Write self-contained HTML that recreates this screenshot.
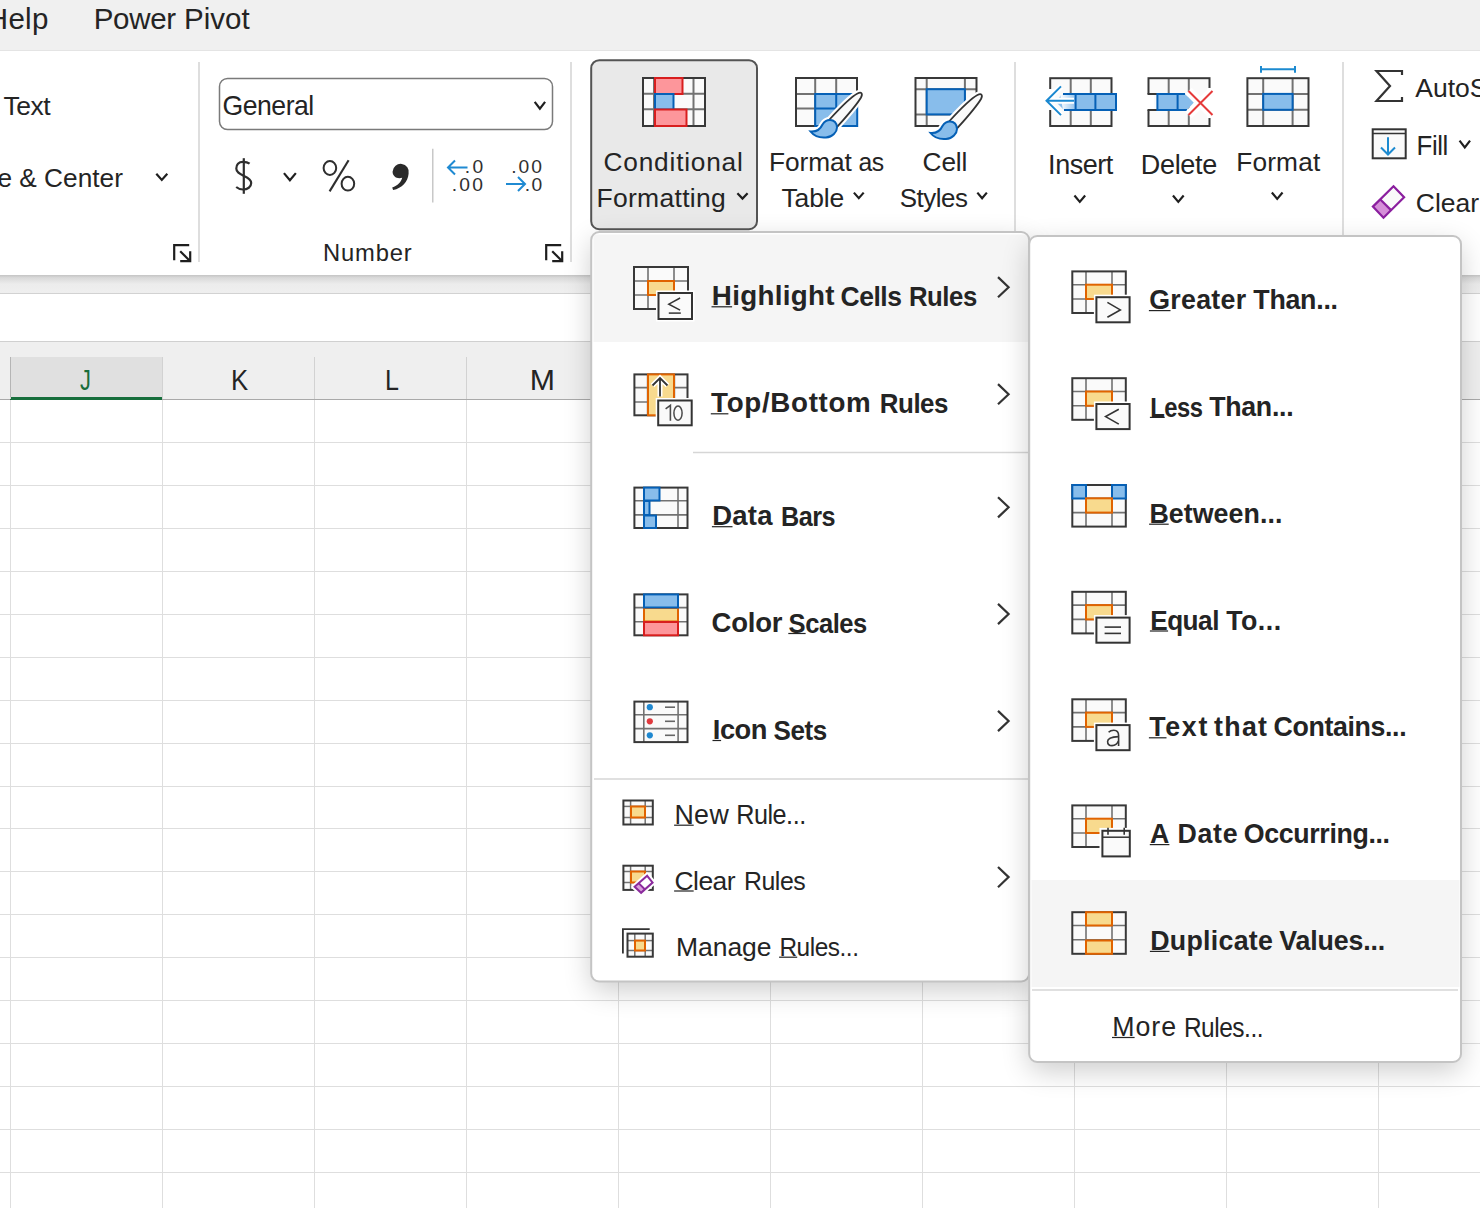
<!DOCTYPE html>
<html><head><meta charset="utf-8"><title>Excel Conditional Formatting</title>
<style>html,body{margin:0;padding:0;background:#fff;overflow:hidden}svg{display:block}text{font-family:"Liberation Sans",sans-serif;white-space:pre}</style>
</head><body>
<svg width="1480" height="1208" viewBox="0 0 1480 1208" font-family="Liberation Sans, sans-serif">
<defs>
<linearGradient id="rshadow" x1="0" y1="0" x2="0" y2="1">
<stop offset="0" stop-color="#c4c4c4"/><stop offset="0.15" stop-color="#d9d9d9"/><stop offset="0.5" stop-color="#ececec"/><stop offset="1" stop-color="#efefef"/></linearGradient>
<filter id="msh" x="-30%" y="-30%" width="160%" height="160%">
<feGaussianBlur in="SourceAlpha" stdDeviation="14"/><feOffset dx="0" dy="9"/>
<feComponentTransfer><feFuncA type="linear" slope="0.2"/></feComponentTransfer>
<feMerge><feMergeNode/><feMergeNode in="SourceGraphic"/></feMerge></filter>
</defs>
<rect x="0" y="0" width="1480" height="1208" fill="#ffffff" stroke="none" stroke-width="0" rx="0" />
<rect x="0" y="0" width="1480" height="50" fill="#f0f0f0" stroke="none" stroke-width="0" rx="0" />
<line x1="0" y1="50.5" x2="1480" y2="50.5" stroke="#e4e4e4" stroke-width="1" />
<text x="-13.20" y="28.60" font-size="29.5" font-weight="normal" fill="#242424" letter-spacing="0.267">Help</text>
<text x="93.80" y="28.60" font-size="29.5" font-weight="normal" fill="#242424" letter-spacing="-0.350">Power</text>
<text x="184.10" y="28.60" font-size="29.5" font-weight="normal" fill="#242424" letter-spacing="-0.025">Pivot</text>
<rect x="0" y="275" width="1480" height="18" fill="url(#rshadow)" stroke="none" stroke-width="0" rx="0" />
<line x1="0" y1="293.5" x2="1480" y2="293.5" stroke="#d2d2d2" stroke-width="1" />
<line x1="0" y1="341.5" x2="1480" y2="341.5" stroke="#d0d0d0" stroke-width="1" />
<rect x="0" y="342" width="1480" height="57" fill="#efefef" stroke="none" stroke-width="0" rx="0" />
<rect x="10" y="357" width="152" height="40" fill="#e0e0e0" stroke="none" stroke-width="0" rx="0" />
<line x1="0" y1="399.5" x2="1480" y2="399.5" stroke="#a9a9a9" stroke-width="1" />
<rect x="10" y="397" width="152" height="3" fill="#176e3c" stroke="none" stroke-width="0" rx="0" />
<line x1="10.5" y1="357" x2="10.5" y2="399" stroke="#d2d2d2" stroke-width="1" />
<line x1="162.5" y1="357" x2="162.5" y2="399" stroke="#d2d2d2" stroke-width="1" />
<line x1="314.5" y1="357" x2="314.5" y2="399" stroke="#d2d2d2" stroke-width="1" />
<line x1="466.5" y1="357" x2="466.5" y2="399" stroke="#d2d2d2" stroke-width="1" />
<line x1="618.5" y1="357" x2="618.5" y2="399" stroke="#d2d2d2" stroke-width="1" />
<line x1="770.5" y1="357" x2="770.5" y2="399" stroke="#d2d2d2" stroke-width="1" />
<line x1="922.5" y1="357" x2="922.5" y2="399" stroke="#d2d2d2" stroke-width="1" />
<line x1="1074.5" y1="357" x2="1074.5" y2="399" stroke="#d2d2d2" stroke-width="1" />
<line x1="1226.5" y1="357" x2="1226.5" y2="399" stroke="#d2d2d2" stroke-width="1" />
<line x1="1378.5" y1="357" x2="1378.5" y2="399" stroke="#d2d2d2" stroke-width="1" />
<line x1="10.5" y1="357" x2="10.5" y2="397" stroke="#b5b5b5" stroke-width="1" />
<g transform="translate(85.5,0) scale(0.72,1) translate(-85.5,0)">
<text x="78.00" y="389.90" font-size="30.25" font-weight="normal" fill="#1a6d3b" letter-spacing="0.000">J</text>
</g>
<g transform="translate(239.6,0) scale(0.85,1) translate(-239.6,0)">
<text x="229.60" y="389.90" font-size="30.25" font-weight="normal" fill="#242424" letter-spacing="0.000">K</text>
</g>
<g transform="translate(391.95,0) scale(0.83,1) translate(-391.95,0)">
<text x="383.45" y="389.90" font-size="30.25" font-weight="normal" fill="#242424" letter-spacing="0.000">L</text>
</g>
<g transform="translate(542.25,0) scale(1.0,1) translate(-542.25,0)">
<text x="529.75" y="389.90" font-size="30.25" font-weight="normal" fill="#242424" letter-spacing="0.000">M</text>
</g>
<rect x="0" y="442" width="1480" height="1" fill="#dedede" stroke="none" stroke-width="0" rx="0" />
<rect x="0" y="485" width="1480" height="1" fill="#dedede" stroke="none" stroke-width="0" rx="0" />
<rect x="0" y="528" width="1480" height="1" fill="#dedede" stroke="none" stroke-width="0" rx="0" />
<rect x="0" y="571" width="1480" height="1" fill="#dedede" stroke="none" stroke-width="0" rx="0" />
<rect x="0" y="614" width="1480" height="1" fill="#dedede" stroke="none" stroke-width="0" rx="0" />
<rect x="0" y="657" width="1480" height="1" fill="#dedede" stroke="none" stroke-width="0" rx="0" />
<rect x="0" y="700" width="1480" height="1" fill="#dedede" stroke="none" stroke-width="0" rx="0" />
<rect x="0" y="743" width="1480" height="1" fill="#dedede" stroke="none" stroke-width="0" rx="0" />
<rect x="0" y="786" width="1480" height="1" fill="#dedede" stroke="none" stroke-width="0" rx="0" />
<rect x="0" y="828" width="1480" height="1" fill="#dedede" stroke="none" stroke-width="0" rx="0" />
<rect x="0" y="871" width="1480" height="1" fill="#dedede" stroke="none" stroke-width="0" rx="0" />
<rect x="0" y="914" width="1480" height="1" fill="#dedede" stroke="none" stroke-width="0" rx="0" />
<rect x="0" y="957" width="1480" height="1" fill="#dedede" stroke="none" stroke-width="0" rx="0" />
<rect x="0" y="1000" width="1480" height="1" fill="#dedede" stroke="none" stroke-width="0" rx="0" />
<rect x="0" y="1043" width="1480" height="1" fill="#dedede" stroke="none" stroke-width="0" rx="0" />
<rect x="0" y="1086" width="1480" height="1" fill="#dedede" stroke="none" stroke-width="0" rx="0" />
<rect x="0" y="1129" width="1480" height="1" fill="#dedede" stroke="none" stroke-width="0" rx="0" />
<rect x="0" y="1172" width="1480" height="1" fill="#dedede" stroke="none" stroke-width="0" rx="0" />
<line x1="10.5" y1="400" x2="10.5" y2="1208" stroke="#dedede" stroke-width="1" />
<line x1="162.5" y1="400" x2="162.5" y2="1208" stroke="#dedede" stroke-width="1" />
<line x1="314.5" y1="400" x2="314.5" y2="1208" stroke="#dedede" stroke-width="1" />
<line x1="466.5" y1="400" x2="466.5" y2="1208" stroke="#dedede" stroke-width="1" />
<line x1="618.5" y1="400" x2="618.5" y2="1208" stroke="#dedede" stroke-width="1" />
<line x1="770.5" y1="400" x2="770.5" y2="1208" stroke="#dedede" stroke-width="1" />
<line x1="922.5" y1="400" x2="922.5" y2="1208" stroke="#dedede" stroke-width="1" />
<line x1="1074.5" y1="400" x2="1074.5" y2="1208" stroke="#dedede" stroke-width="1" />
<line x1="1226.5" y1="400" x2="1226.5" y2="1208" stroke="#dedede" stroke-width="1" />
<line x1="1378.5" y1="400" x2="1378.5" y2="1208" stroke="#dedede" stroke-width="1" />
<line x1="199" y1="62" x2="199" y2="262" stroke="#d3d3d3" stroke-width="1.5" />
<line x1="571" y1="62" x2="571" y2="262" stroke="#d3d3d3" stroke-width="1.5" />
<line x1="1015" y1="62" x2="1015" y2="275" stroke="#d3d3d3" stroke-width="1.5" />
<line x1="1343" y1="62" x2="1343" y2="275" stroke="#d3d3d3" stroke-width="1.5" />
<text x="3.50" y="115.00" font-size="26.5" font-weight="normal" fill="#242424" letter-spacing="-0.467">Text</text>
<text x="-62.40" y="186.50" font-size="26.25" font-weight="normal" fill="#242424">Merge & Center</text>
<path d="M156.30,173.70 L161.80,179.90 L167.30,173.70" fill="none" stroke="#1f1f1f" stroke-width="2.2" />
<path d="M174.2,260.2 V245.2 H189.2" fill="none" stroke="#1e1e1e" stroke-width="2.2" />
<path d="M180.2,251.2 L189.7,260.7" fill="none" stroke="#1e1e1e" stroke-width="2.2" />
<path d="M190.2,251.2 V261.2 H180.2" fill="none" stroke="#1e1e1e" stroke-width="2.2" />
<path d="M546.2,260.2 V245.2 H561.2" fill="none" stroke="#1e1e1e" stroke-width="2.2" />
<path d="M552.2,251.2 L561.7,260.7" fill="none" stroke="#1e1e1e" stroke-width="2.2" />
<path d="M562.2,251.2 V261.2 H552.2" fill="none" stroke="#1e1e1e" stroke-width="2.2" />
<text x="323.00" y="260.80" font-size="23.75" font-weight="normal" fill="#242424" letter-spacing="0.860">Number</text>
<rect x="219.5" y="78.5" width="333" height="51" fill="#ffffff" stroke="#7a7a7a" stroke-width="1.5" rx="8" />
<g transform="translate(222.55,0) scale(0.9951,1)">
<text x="0" y="115.10" font-size="26.75" font-weight="normal" fill="#242424" letter-spacing="-0.500">General</text>
</g>
<path d="M534.70,101.80 L539.90,108.60 L545.10,101.80" fill="none" stroke="#1f1f1f" stroke-width="2.2" />
<path d="M243.8,158.2 V193.8" fill="none" stroke="#2e2e2e" stroke-width="2.2" />
<path d="M249.6,163.6 C247.5,162 245,161.8 243,161.8 C238.5,161.8 236.3,165 236.3,168.5 C236.3,172.5 240,174 244,176 C248.5,178 251.2,180 251.2,183 C251.2,187 247.5,189.5 243,189.5 C240.5,189.5 238,188.5 236.2,187" fill="none" stroke="#2e2e2e" stroke-width="2.2" />
<path d="M283.95,173.10 L289.90,180.30 L295.85,173.10" fill="none" stroke="#1f1f1f" stroke-width="2.2" />
<ellipse cx="329.9" cy="168" rx="6.3" ry="6.9" fill="none" stroke="#2e2e2e" stroke-width="2"/>
<ellipse cx="347.9" cy="183.7" rx="6.3" ry="6.9" fill="none" stroke="#2e2e2e" stroke-width="2"/>
<path d="M348.6,160.2 L329.6,191.4" fill="none" stroke="#2e2e2e" stroke-width="2.1" />
<path d="M400.5,162.5 a8,8 0 1 1 0.1,0 Z" fill="none" stroke="none" stroke-width="0" />
<path d="M392.6,171.5 a8.1,8.1 0 1 1 16,2.2 c-0.8,8 -6.5,14.5 -15.5,16.3 l-0.9,-2.4 c5.5,-1.8 9,-5.6 10,-9.8 c-5.2,1.6 -9.8,-1.5 -9.6,-6.3 Z" fill="#2a2a2a"/>
<line x1="432.75" y1="148.75" x2="432.75" y2="202.5" stroke="#c8c8c8" stroke-width="1.5" />
<path d="M467.5,167.5 H448 M455,160.5 L448,167.5 L455,174.5" fill="none" stroke="#1f8ad2" stroke-width="2" />
<text x="464.80" y="172.50" font-size="19.25" font-weight="normal" fill="#303030" letter-spacing="2.300">.0</text>
<text x="451.80" y="191.00" font-size="19.25" font-weight="normal" fill="#303030" letter-spacing="2.150">.00</text>
<text x="511.30" y="172.50" font-size="19.25" font-weight="normal" fill="#303030" letter-spacing="1.900">.00</text>
<path d="M506,184 H525 M518,177 L525,184 L518,191" fill="none" stroke="#1f8ad2" stroke-width="2" />
<text x="524.80" y="191.00" font-size="19.25" font-weight="normal" fill="#303030" letter-spacing="1.300">.0</text>
<rect x="591.2" y="60.2" width="165.8" height="169" fill="#e9e9e9" stroke="#545454" stroke-width="2" rx="8" />
<rect x="643.0" y="78.0" width="62" height="48" fill="#fafafa" stroke="none" stroke-width="0" rx="0" />
<line x1="654" y1="78.0" x2="654" y2="126.0" stroke="#727272" stroke-width="2" />
<line x1="693.5" y1="78.0" x2="693.5" y2="126.0" stroke="#727272" stroke-width="2" />
<line x1="643.0" y1="93.8" x2="705.0" y2="93.8" stroke="#727272" stroke-width="2" />
<line x1="643.0" y1="109.3" x2="705.0" y2="109.3" stroke="#727272" stroke-width="2" />
<rect x="643.0" y="78.0" width="62" height="48" fill="none" stroke="#383838" stroke-width="2" rx="0" />
<rect x="655.0" y="78.0" width="27.5" height="16" fill="#fd969b" stroke="#d81e1e" stroke-width="2" rx="0" />
<rect x="655.0" y="94.0" width="18.5" height="15.5" fill="#88bdeb" stroke="#0560b6" stroke-width="2" rx="0" />
<rect x="655.0" y="109.5" width="31.5" height="16.5" fill="#fd969b" stroke="#d81e1e" stroke-width="2" rx="0" />
<text x="603.60" y="170.50" font-size="26.25" font-weight="normal" fill="#242424" letter-spacing="0.790">Conditional</text>
<text x="596.50" y="206.50" font-size="26.5" font-weight="normal" fill="#242424" letter-spacing="0.289">Formatting</text>
<path d="M737.40,193.20 L742.50,198.60 L747.60,193.20" fill="none" stroke="#1f1f1f" stroke-width="2.2" />
<rect x="796.0" y="78.0" width="61" height="48" fill="#fafafa" stroke="none" stroke-width="0" rx="0" />
<line x1="815.2" y1="78.0" x2="815.2" y2="126.0" stroke="#727272" stroke-width="2" />
<line x1="836.2" y1="78.0" x2="836.2" y2="126.0" stroke="#727272" stroke-width="2" />
<line x1="796.0" y1="94" x2="857.0" y2="94" stroke="#727272" stroke-width="2" />
<line x1="796.0" y1="108.6" x2="857.0" y2="108.6" stroke="#727272" stroke-width="2" />
<rect x="796.0" y="78.0" width="61" height="48" fill="none" stroke="#383838" stroke-width="2" rx="0" />
<rect x="815.2" y="94" width="42" height="32" fill="#88bdeb" stroke="#0560b6" stroke-width="2" rx="0" />
<line x1="836.2" y1="94" x2="836.2" y2="126" stroke="#0560b6" stroke-width="2" />
<line x1="815.2" y1="108.6" x2="857" y2="108.6" stroke="#0560b6" stroke-width="2" />
<path d="M829.5,119.5 C840,108 851,97 857.5,93.5 C861.5,91.5 863,93.5 861,97.5 C856,106 846,117 837.5,126.5 Z" fill="#ffffff" stroke="#ffffff" stroke-width="6" stroke-linejoin="round"/>
<path d="M822.5,124.5 C820,130 816,132 810.5,131.5 C814,136 820,138 826,137.5 C832.5,137 837,132 837,127.5 C837,123 834,120 830,120 C826.5,120 824,122 822.5,124.5 Z" fill="#ffffff" stroke="#ffffff" stroke-width="6" stroke-linejoin="round"/>
<path d="M829.5,119.5 C840,108 851,97 857.5,93.5 C861.5,91.5 863,93.5 861,97.5 C856,106 846,117 837.5,126.5 Z" fill="#fafafa" stroke="#333" stroke-width="1.8" />
<path d="M822.5,124.5 C820,130 816,132 810.5,131.5 C814,136 820,138 826,137.5 C832.5,137 837,132 837,127.5 C837,123 834,120 830,120 C826.5,120 824,122 822.5,124.5 Z" fill="#88bdeb" stroke="#0560b6" stroke-width="2" />
<text x="768.90" y="170.70" font-size="26.25" font-weight="normal" fill="#242424" letter-spacing="-0.040">Format</text>
<g transform="translate(858.40,0) scale(0.9418,1)">
<text x="0" y="171.30" font-size="26.25" font-weight="normal" fill="#242424" letter-spacing="-0.500">as</text>
</g>
<text x="781.50" y="206.70" font-size="26.5" font-weight="normal" fill="#242424" letter-spacing="-0.175">Table</text>
<path d="M853.90,192.60 L858.80,198.20 L863.70,192.60" fill="none" stroke="#1f1f1f" stroke-width="2.2" />
<rect x="915.5" y="78.0" width="61.0" height="48" fill="#fafafa" stroke="none" stroke-width="0" rx="0" />
<line x1="926.7" y1="78.0" x2="926.7" y2="126.0" stroke="#727272" stroke-width="2" />
<line x1="964.9" y1="78.0" x2="964.9" y2="126.0" stroke="#727272" stroke-width="2" />
<line x1="915.5" y1="89.2" x2="976.5" y2="89.2" stroke="#727272" stroke-width="2" />
<line x1="915.5" y1="114.4" x2="976.5" y2="114.4" stroke="#727272" stroke-width="2" />
<rect x="915.5" y="78.0" width="61.0" height="48" fill="none" stroke="#383838" stroke-width="2" rx="0" />
<rect x="926.7" y="89.2" width="38.2" height="25.2" fill="#88bdeb" stroke="#0560b6" stroke-width="2" rx="0" />
<path d="M966,104 L992,84 V142 H936 Z" fill="#ffffff" stroke="none" stroke-width="0" />
<path d="M949.5,121.0 C960,109.5 971,98.5 977.5,95.0 C981.5,93.0 983,95.0 981,99.0 C976,107.5 966,118.5 957.5,128.0 Z" fill="#ffffff" stroke="#ffffff" stroke-width="6" stroke-linejoin="round"/>
<path d="M942.5,126.0 C940,131.5 936,133.5 930.5,133.0 C934,137.5 940,139.5 946,139.0 C952.5,138.5 957,133.5 957,129.0 C957,124.5 954,121.5 950,121.5 C946.5,121.5 944,123.5 942.5,126.0 Z" fill="#ffffff" stroke="#ffffff" stroke-width="6" stroke-linejoin="round"/>
<path d="M949.5,121.0 C960,109.5 971,98.5 977.5,95.0 C981.5,93.0 983,95.0 981,99.0 C976,107.5 966,118.5 957.5,128.0 Z" fill="#fafafa" stroke="#333" stroke-width="1.8" />
<path d="M942.5,126.0 C940,131.5 936,133.5 930.5,133.0 C934,137.5 940,139.5 946,139.0 C952.5,138.5 957,133.5 957,129.0 C957,124.5 954,121.5 950,121.5 C946.5,121.5 944,123.5 942.5,126.0 Z" fill="#88bdeb" stroke="#0560b6" stroke-width="2" />
<text x="922.60" y="170.70" font-size="26.25" font-weight="normal" fill="#242424" letter-spacing="-0.167">Cell</text>
<g transform="translate(899.80,0) scale(0.9784,1)">
<text x="0" y="207.30" font-size="26.5" font-weight="normal" fill="#242424" letter-spacing="-0.500">Styles</text>
</g>
<path d="M977.35,192.60 L982.10,198.20 L986.85,192.60" fill="none" stroke="#1f1f1f" stroke-width="2.2" />
<rect x="1050.2" y="78.2" width="61.299999999999955" height="47.8" fill="#fafafa" stroke="none" stroke-width="0" rx="0" />
<line x1="1070.7" y1="78.2" x2="1070.7" y2="126.0" stroke="#727272" stroke-width="2" />
<line x1="1090.8" y1="78.2" x2="1090.8" y2="126.0" stroke="#727272" stroke-width="2" />
<rect x="1050.2" y="78.2" width="61.299999999999955" height="47.8" fill="none" stroke="#383838" stroke-width="2" rx="0" />
<rect x="1045" y="89" width="10" height="21" fill="#ffffff" stroke="none" stroke-width="0" rx="0" />
<linearGradient id="ifade" x1="0" x2="1"><stop offset="0" stop-color="#ffffff"/><stop offset="1" stop-color="#88bdeb"/></linearGradient>
<path d="M1061,94 H1116 V110 H1064 L1057,103 Z" fill="#88bdeb" stroke="none" stroke-width="0" />
<path d="M1060,94 H1077 V110 H1063 Z" fill="url(#ifade)" stroke="none" stroke-width="0" />
<path d="M1063,94 H1116 V110 H1064" fill="none" stroke="#0560b6" stroke-width="2" />
<line x1="1075.6" y1="94" x2="1075.6" y2="110" stroke="#0560b6" stroke-width="2" />
<line x1="1095.4" y1="94" x2="1095.4" y2="110" stroke="#0560b6" stroke-width="2" />
<path d="M1074,100.7 H1046.5 M1061,86.4 L1046.5,100.7 L1061,115.1" fill="none" stroke="#ffffff" stroke-width="6" stroke-linejoin="round"/>
<path d="M1074,100.7 H1046.5 M1061,86.4 L1046.5,100.7 L1061,115.1" fill="none" stroke="#1a88d0" stroke-width="2" />
<text x="1048.10" y="174.20" font-size="27.0" font-weight="normal" fill="#242424" letter-spacing="-0.460">Insert</text>
<path d="M1074.45,195.55 L1079.80,201.85 L1085.15,195.55" fill="none" stroke="#1f1f1f" stroke-width="2.2" />
<rect x="1148.5" y="78.2" width="61.0" height="47.8" fill="#fafafa" stroke="none" stroke-width="0" rx="0" />
<line x1="1168.7" y1="78.2" x2="1168.7" y2="126.0" stroke="#727272" stroke-width="2" />
<line x1="1188.8" y1="78.2" x2="1188.8" y2="126.0" stroke="#727272" stroke-width="2" />
<rect x="1148.5" y="78.2" width="61.0" height="47.8" fill="none" stroke="#383838" stroke-width="2" rx="0" />
<rect x="1146" y="94" width="8" height="16" fill="#ffffff" stroke="none" stroke-width="0" rx="0" />
<line x1="1147.5" y1="94" x2="1158" y2="94" stroke="#383838" stroke-width="2" />
<line x1="1147.5" y1="110" x2="1158" y2="110" stroke="#383838" stroke-width="2" />
<path d="M1157.4,94 H1185 L1194.3,102 L1187,110 H1157.4 Z" fill="#88bdeb" stroke="none" stroke-width="0" />
<path d="M1185,94 H1157.4 V110 H1187" fill="none" stroke="#0560b6" stroke-width="2" />
<line x1="1177.6" y1="94" x2="1177.6" y2="110" stroke="#0560b6" stroke-width="2" />
<rect x="1207" y="88" width="6" height="30" fill="#ffffff" stroke="none" stroke-width="0" rx="0" />
<path d="M1188.5,91 L1212.5,115 M1212.5,91 L1188.5,115" fill="none" stroke="#ffffff" stroke-width="9" />
<path d="M1188.5,91 L1212.5,115 M1212.5,91 L1188.5,115" fill="none" stroke="#e53a3a" stroke-width="2" />
<text x="1140.80" y="174.20" font-size="27.0" font-weight="normal" fill="#242424" letter-spacing="-0.340">Delete</text>
<path d="M1172.95,195.55 L1178.30,201.85 L1183.65,195.55" fill="none" stroke="#1f1f1f" stroke-width="2.2" />
<rect x="1247.4" y="78.2" width="61.09999999999991" height="47.8" fill="#fafafa" stroke="none" stroke-width="0" rx="0" />
<line x1="1263.2" y1="78.2" x2="1263.2" y2="126.0" stroke="#727272" stroke-width="2" />
<line x1="1292.6" y1="78.2" x2="1292.6" y2="126.0" stroke="#727272" stroke-width="2" />
<line x1="1247.4" y1="93.9" x2="1308.5" y2="93.9" stroke="#727272" stroke-width="2" />
<line x1="1247.4" y1="109.8" x2="1308.5" y2="109.8" stroke="#727272" stroke-width="2" />
<rect x="1247.4" y="78.2" width="61.09999999999991" height="47.8" fill="none" stroke="#383838" stroke-width="2" rx="0" />
<rect x="1263.2" y="93.9" width="29.4" height="15.9" fill="#88bdeb" stroke="#0560b6" stroke-width="2" rx="0" />
<path d="M1261,69.2 H1295 M1261,66 V72.7 M1295,66 V72.7" fill="none" stroke="#1c8ad0" stroke-width="2" />
<text x="1236.20" y="170.60" font-size="26.25" font-weight="normal" fill="#242424" letter-spacing="0.180">Format</text>
<path d="M1271.85,192.55 L1277.20,198.85 L1282.55,192.55" fill="none" stroke="#1f1f1f" stroke-width="2.2" />
<path d="M1402,75 V71 H1376.5 L1390,86 L1376.5,101 H1402 V97" fill="none" stroke="#333" stroke-width="2.2" />
<text x="1415.30" y="96.90" font-size="26.5" font-weight="normal" fill="#242424" letter-spacing="0.000">AutoSum</text>
<rect x="1372.7" y="129.3" width="33" height="29" fill="#fafafa" stroke="#333" stroke-width="2" rx="0" />
<line x1="1372.7" y1="133.5" x2="1405.7" y2="133.5" stroke="#333" stroke-width="1.5" />
<path d="M1388,137.3 V154 M1381,147.5 L1388,154.5 L1395,147.5" fill="none" stroke="#1c8ad0" stroke-width="2" />
<g transform="translate(1416.60,0) scale(0.9582,1)">
<text x="0" y="155.20" font-size="27.0" font-weight="normal" fill="#242424" letter-spacing="-0.500">Fill</text>
</g>
<path d="M1459.55,140.65 L1464.80,147.35 L1470.05,140.65" fill="none" stroke="#1f1f1f" stroke-width="2.2" />
<path d="M1393.5,186.2 L1404.1,197.3 L1383.5,217.7 L1372.9,206.6 Z" fill="#f9f9f9" stroke="none" stroke-width="0" />
<path d="M1372.9,206.6 L1380.6,199.7 L1390.8,209.9 L1383.5,217.7 Z" fill="#d58fd8" stroke="none" stroke-width="0" />
<path d="M1393.5,186.2 L1404.1,197.3 L1383.5,217.7 L1372.9,206.6 Z" fill="none" stroke="#8b1f9f" stroke-width="2.2" />
<line x1="1380.6" y1="199.7" x2="1390.8" y2="209.9" stroke="#8b1f9f" stroke-width="2.2" />
<text x="1415.80" y="212.00" font-size="26.5" font-weight="normal" fill="#242424" letter-spacing="0.000">Clear</text>
<g filter="url(#msh)">
<rect x="591.2" y="232" width="438" height="749.5" fill="#ffffff" stroke="none" stroke-width="0" rx="8" />
</g>
<clipPath id="m1clip"><rect x="592.2" y="233" width="436" height="747.5" rx="7"/></clipPath>
<g clip-path="url(#m1clip)">
<rect x="593.5" y="234.5" width="435" height="107.5" fill="#f5f5f5" stroke="none" stroke-width="0" rx="0" />
</g>
<rect x="591.2" y="232" width="438" height="749.5" fill="none" stroke="#c4c4c4" stroke-width="2" rx="8" />
<rect x="634.0" y="267.0" width="54" height="42" fill="#fafafa" stroke="none" stroke-width="0" rx="0" />
<line x1="648" y1="267.0" x2="648" y2="309.0" stroke="#727272" stroke-width="1.6" />
<line x1="674" y1="267.0" x2="674" y2="309.0" stroke="#727272" stroke-width="1.6" />
<line x1="634.0" y1="281" x2="688.0" y2="281" stroke="#727272" stroke-width="1.6" />
<line x1="634.0" y1="295" x2="688.0" y2="295" stroke="#727272" stroke-width="1.6" />
<rect x="634.0" y="267.0" width="54" height="42" fill="none" stroke="#383838" stroke-width="2" rx="0" />
<rect x="648.0" y="281.0" width="26" height="14" fill="#f8da8e" stroke="#e06300" stroke-width="2" rx="0" />
<rect x="656.0" y="290.5" width="38.5" height="31" fill="#ffffff" stroke="none" stroke-width="0" rx="0" />
<rect x="658.5" y="293" width="33.5" height="26" fill="#fafafa" stroke="#333" stroke-width="2" rx="0" />
<path d="M680.1,298 L668.8,304.2 L680.1,310.1" fill="none" stroke="#333" stroke-width="1.5" />
<line x1="668.8" y1="313.1" x2="680.8" y2="313.1" stroke="#333" stroke-width="1.5" />
<text x="711.80" y="305.40" font-size="27.75" font-weight="bold" fill="#242424" letter-spacing="0.313">Highlight</text>
<rect x="711.50" y="306.20" width="20.60" height="1.2" fill="#242424"/>
<g transform="translate(840.60,0) scale(0.9547,1)">
<text x="0" y="306.00" font-size="27.75" font-weight="bold" fill="#242424" letter-spacing="-0.500">Cells</text>
</g>
<g transform="translate(909.00,0) scale(0.9270,1)">
<text x="0" y="306.00" font-size="27.75" font-weight="bold" fill="#242424" letter-spacing="-0.500">Rules</text>
</g>
<path d="M998,277.09999999999997 L1008.6,287.2 L998,297.3" fill="none" stroke="#333" stroke-width="2.2" />
<rect x="634.4" y="374.4" width="53.10000000000002" height="40.900000000000034" fill="#fafafa" stroke="none" stroke-width="0" rx="0" />
<line x1="647.6" y1="374.4" x2="647.6" y2="415.3" stroke="#727272" stroke-width="1.6" />
<line x1="674.4" y1="374.4" x2="674.4" y2="415.3" stroke="#727272" stroke-width="1.6" />
<line x1="634.4" y1="387.6" x2="687.5" y2="387.6" stroke="#727272" stroke-width="1.6" />
<line x1="634.4" y1="402" x2="687.5" y2="402" stroke="#727272" stroke-width="1.6" />
<rect x="634.4" y="374.4" width="53.10000000000002" height="40.900000000000034" fill="none" stroke="#383838" stroke-width="2" rx="0" />
<rect x="648.0" y="374.4" width="26" height="40.900000000000034" fill="#f8da8e" stroke="#e06300" stroke-width="2" rx="0" />
<path d="M660,396.5 V378.5 M652.5,385.5 L660,378 L667.5,385.5" fill="none" stroke="#ffffff" stroke-width="5" />
<path d="M660,396.5 V378.5 M652.5,385.5 L660,378 L667.5,385.5" fill="none" stroke="#333" stroke-width="1.8" />
<rect x="655.7" y="398.0" width="38.5" height="29.80000000000001" fill="#ffffff" stroke="none" stroke-width="0" rx="0" />
<rect x="658.2" y="400.5" width="33.5" height="24.80000000000001" fill="#fafafa" stroke="#333" stroke-width="2" rx="0" />
<path d="M665.6,408.8 L670.4,405.4 V420.8" fill="none" stroke="#4a4a4a" stroke-width="1.6" />
<ellipse cx="678" cy="413.1" rx="4.1" ry="7.1" fill="none" stroke="#4a4a4a" stroke-width="1.5"/>
<text x="711.10" y="412.40" font-size="27.75" font-weight="bold" fill="#242424" letter-spacing="0.678">Top/Bottom</text>
<rect x="710.80" y="413.20" width="17.60" height="1.2" fill="#242424"/>
<g transform="translate(879.80,0) scale(0.9338,1)">
<text x="0" y="413.00" font-size="27.75" font-weight="bold" fill="#242424" letter-spacing="-0.500">Rules</text>
</g>
<path d="M998,384.09999999999997 L1008.6,394.2 L998,404.3" fill="none" stroke="#333" stroke-width="2.2" />
<line x1="693" y1="452.5" x2="1028" y2="452.5" stroke="#d6d6d6" stroke-width="1.5" />
<rect x="634.4" y="487.6" width="53.10000000000002" height="40.39999999999998" fill="#fafafa" stroke="none" stroke-width="0" rx="0" />
<line x1="678" y1="487.6" x2="678" y2="528.0" stroke="#727272" stroke-width="1.6" />
<line x1="634.4" y1="500.7" x2="687.5" y2="500.7" stroke="#727272" stroke-width="1.6" />
<line x1="634.4" y1="514.9" x2="687.5" y2="514.9" stroke="#727272" stroke-width="1.6" />
<rect x="634.4" y="487.6" width="53.10000000000002" height="40.39999999999998" fill="none" stroke="#383838" stroke-width="2" rx="0" />
<rect x="644.0" y="487.6" width="15.5" height="12.899999999999977" fill="#88bdeb" stroke="#0560b6" stroke-width="2" rx="0" />
<rect x="644.0" y="501.0" width="5.5" height="14" fill="#88bdeb" stroke="#0560b6" stroke-width="2" rx="0" />
<rect x="644.0" y="515.5" width="12" height="12.5" fill="#88bdeb" stroke="#0560b6" stroke-width="2" rx="0" />
<text x="712.20" y="525.30" font-size="27.5" font-weight="bold" fill="#242424" letter-spacing="0.233">Data</text>
<rect x="711.90" y="526.10" width="20.60" height="1.2" fill="#242424"/>
<g transform="translate(780.90,0) scale(0.9176,1)">
<text x="0" y="525.90" font-size="27.5" font-weight="bold" fill="#242424" letter-spacing="-0.500">Bars</text>
</g>
<path d="M998,497.2 L1008.6,507.29999999999995 L998,517.4" fill="none" stroke="#333" stroke-width="2.2" />
<rect x="634.4" y="594.4" width="53.10000000000002" height="40.89999999999998" fill="#fafafa" stroke="none" stroke-width="0" rx="0" />
<line x1="634.4" y1="607.6" x2="687.5" y2="607.6" stroke="#727272" stroke-width="1.6" />
<line x1="634.4" y1="621.7" x2="687.5" y2="621.7" stroke="#727272" stroke-width="1.6" />
<rect x="634.4" y="594.4" width="53.10000000000002" height="40.89999999999998" fill="none" stroke="#383838" stroke-width="2" rx="0" />
<rect x="644.0" y="608.0" width="34" height="13.5" fill="#f8da8e" stroke="#e06300" stroke-width="2" rx="0" />
<rect x="644.0" y="622.0" width="34" height="13.299999999999955" fill="#fd969b" stroke="#d81e1e" stroke-width="2" rx="0" />
<rect x="644.0" y="594.4" width="34" height="13.100000000000023" fill="#88bdeb" stroke="#0560b6" stroke-width="2" rx="0" />
<text x="711.60" y="632.10" font-size="27.5" font-weight="bold" fill="#242424" letter-spacing="-0.250">Color</text>
<g transform="translate(788.60,0) scale(0.9290,1)">
<text x="0" y="632.70" font-size="27.5" font-weight="bold" fill="#242424" letter-spacing="-0.500">Scales</text>
</g>
<rect x="788.30" y="632.90" width="17.32" height="1.2" fill="#242424"/>
<path d="M998,603.9 L1008.6,614.0 L998,624.1" fill="none" stroke="#333" stroke-width="2.2" />
<rect x="634.4" y="701.6" width="53.10000000000002" height="40.5" fill="#fafafa" stroke="none" stroke-width="0" rx="0" />
<line x1="643.8" y1="701.6" x2="643.8" y2="742.1" stroke="#727272" stroke-width="1.6" />
<line x1="678.1" y1="701.6" x2="678.1" y2="742.1" stroke="#727272" stroke-width="1.6" />
<line x1="634.4" y1="714.8" x2="687.5" y2="714.8" stroke="#727272" stroke-width="1.6" />
<line x1="634.4" y1="728.6" x2="687.5" y2="728.6" stroke="#727272" stroke-width="1.6" />
<rect x="634.4" y="701.6" width="53.10000000000002" height="40.5" fill="none" stroke="#383838" stroke-width="2" rx="0" />
<circle cx="649.8" cy="707.2" r="3.1" fill="#1f88d0"/>
<line x1="665" y1="707.2" x2="675" y2="707.2" stroke="#666" stroke-width="1.6" />
<circle cx="649.8" cy="721.3" r="3.1" fill="#e0393e"/>
<line x1="665" y1="721.3" x2="675" y2="721.3" stroke="#666" stroke-width="1.6" />
<circle cx="649.8" cy="735.3" r="3.1" fill="#1f88d0"/>
<line x1="665" y1="735.3" x2="675" y2="735.3" stroke="#666" stroke-width="1.6" />
<text x="712.80" y="739.10" font-size="27.25" font-weight="bold" fill="#242424" letter-spacing="-0.467">Icon</text>
<rect x="712.50" y="739.90" width="8.60" height="1.2" fill="#242424"/>
<g transform="translate(773.60,0) scale(0.9558,1)">
<text x="0" y="739.70" font-size="27.25" font-weight="bold" fill="#242424" letter-spacing="-0.500">Sets</text>
</g>
<path d="M998,710.9 L1008.6,721.0 L998,731.1" fill="none" stroke="#333" stroke-width="2.2" />
<line x1="594" y1="779" x2="1028" y2="779" stroke="#d6d6d6" stroke-width="1.5" />
<rect x="623.4" y="800.5" width="29.399999999999977" height="24.0" fill="#fafafa" stroke="none" stroke-width="0" rx="0" />
<line x1="630.6" y1="800.5" x2="630.6" y2="824.5" stroke="#727272" stroke-width="1.5" />
<line x1="645.2" y1="800.5" x2="645.2" y2="824.5" stroke="#727272" stroke-width="1.5" />
<line x1="623.4" y1="806.4" x2="652.8" y2="806.4" stroke="#727272" stroke-width="1.5" />
<line x1="623.4" y1="817.5" x2="652.8" y2="817.5" stroke="#727272" stroke-width="1.5" />
<rect x="623.4" y="800.5" width="29.399999999999977" height="24.0" fill="none" stroke="#383838" stroke-width="2" rx="0" />
<rect x="631.0" y="806.5" width="14" height="11.0" fill="#f8da8e" stroke="#e06300" stroke-width="2" rx="0" />
<text x="674.40" y="823.80" font-size="26.75" font-weight="normal" fill="#242424" letter-spacing="0.400">New</text>
<rect x="674.10" y="824.60" width="19.60" height="1.2" fill="#242424"/>
<g transform="translate(736.20,0) scale(0.9419,1)">
<text x="0" y="824.40" font-size="26.75" font-weight="normal" fill="#242424" letter-spacing="-0.500">Rule...</text>
</g>
<rect x="623.4" y="865.7" width="29.399999999999977" height="24.199999999999932" fill="#fafafa" stroke="none" stroke-width="0" rx="0" />
<line x1="630.6" y1="865.7" x2="630.6" y2="889.9" stroke="#727272" stroke-width="1.5" />
<line x1="645.2" y1="865.7" x2="645.2" y2="889.9" stroke="#727272" stroke-width="1.5" />
<line x1="623.4" y1="871.5" x2="652.8" y2="871.5" stroke="#727272" stroke-width="1.5" />
<line x1="623.4" y1="882.5" x2="652.8" y2="882.5" stroke="#727272" stroke-width="1.5" />
<rect x="623.4" y="865.7" width="29.399999999999977" height="24.199999999999932" fill="none" stroke="#383838" stroke-width="2" rx="0" />
<rect x="631.0" y="871.5" width="14" height="11.0" fill="#f8da8e" stroke="#e06300" stroke-width="2" rx="0" />
<path d="M647.2,875.2 L653.3,882.6 L641.1,893.4 L634,886.8 Z" fill="#ffffff" stroke="#ffffff" stroke-width="5" stroke-linejoin="round"/>
<path d="M634.8,886.8 L639,883 L645,889.5 L641.1,892.6 Z" fill="#d9a0dc" stroke="none" stroke-width="0" />
<path d="M647.2,875.8 L652.6,882.6 L641.1,892.8 L634.6,886.8 Z" fill="none" stroke="#8b2b9d" stroke-width="2" />
<line x1="638.5" y1="883" x2="645" y2="889.5" stroke="#8b2b9d" stroke-width="1.8" />
<g transform="translate(674.40,0) scale(0.9984,1)">
<text x="0" y="890.20" font-size="26.5" font-weight="normal" fill="#242424" letter-spacing="-0.500">Clear</text>
</g>
<rect x="674.10" y="890.40" width="19.57" height="1.2" fill="#242424"/>
<g transform="translate(744.00,0) scale(0.9379,1)">
<text x="0" y="890.20" font-size="26.5" font-weight="normal" fill="#242424" letter-spacing="-0.500">Rules</text>
</g>
<path d="M998,867.0 L1008.6,877.1 L998,887.2" fill="none" stroke="#333" stroke-width="2.2" />
<path d="M622.9,953.5 V929.2 H649.7" fill="none" stroke="#333" stroke-width="1.8" />
<rect x="627.5" y="933.6" width="25.299999999999955" height="23.100000000000023" fill="#fafafa" stroke="none" stroke-width="0" rx="0" />
<line x1="634.8" y1="933.6" x2="634.8" y2="956.7" stroke="#727272" stroke-width="1.5" />
<line x1="645.2" y1="933.6" x2="645.2" y2="956.7" stroke="#727272" stroke-width="1.5" />
<line x1="627.5" y1="940.6" x2="652.8" y2="940.6" stroke="#727272" stroke-width="1.5" />
<line x1="627.5" y1="950.5" x2="652.8" y2="950.5" stroke="#727272" stroke-width="1.5" />
<rect x="627.5" y="933.6" width="25.299999999999955" height="23.100000000000023" fill="none" stroke="#383838" stroke-width="2" rx="0" />
<rect x="635.0" y="940.6" width="10" height="9.899999999999977" fill="#f8da8e" stroke="#e06300" stroke-width="2" rx="0" />
<text x="675.90" y="955.80" font-size="26.5" font-weight="normal" fill="#242424" letter-spacing="-0.020">Manage</text>
<g transform="translate(779.40,0) scale(0.9214,1)">
<text x="0" y="956.40" font-size="26.5" font-weight="normal" fill="#242424" letter-spacing="-0.500">Rules...</text>
</g>
<rect x="779.10" y="956.60" width="18.11" height="1.2" fill="#242424"/>
<g filter="url(#msh)">
<rect x="1029.2" y="236" width="431.8" height="826" fill="#ffffff" stroke="none" stroke-width="0" rx="8" />
</g>
<clipPath id="m2clip"><rect x="1030.2" y="237" width="429.8" height="824" rx="7"/></clipPath>
<g clip-path="url(#m2clip)">
<rect x="1031.5" y="880" width="428" height="107" fill="#f5f5f5" stroke="none" stroke-width="0" rx="0" />
</g>
<rect x="1029.2" y="236" width="431.8" height="826" fill="none" stroke="#c4c4c4" stroke-width="2" rx="8" />
<rect x="1072.3" y="271.4" width="53.5" height="41.60000000000002" fill="#fafafa" stroke="none" stroke-width="0" rx="0" />
<line x1="1086" y1="271.4" x2="1086" y2="313.0" stroke="#727272" stroke-width="1.6" />
<line x1="1112" y1="271.4" x2="1112" y2="313.0" stroke="#727272" stroke-width="1.6" />
<line x1="1072.3" y1="284.7" x2="1125.8" y2="284.7" stroke="#727272" stroke-width="1.6" />
<line x1="1072.3" y1="299.0" x2="1125.8" y2="299.0" stroke="#727272" stroke-width="1.6" />
<rect x="1072.3" y="271.4" width="53.5" height="41.60000000000002" fill="none" stroke="#383838" stroke-width="2" rx="0" />
<rect x="1086.0" y="284.7" width="26" height="14.300000000000011" fill="#f8da8e" stroke="#e06300" stroke-width="2" rx="0" />
<rect x="1093.9" y="294.7" width="38.19999999999982" height="30.099999999999966" fill="#ffffff" stroke="none" stroke-width="0" rx="0" />
<rect x="1096.4" y="297.2" width="33.19999999999982" height="25.099999999999966" fill="#fafafa" stroke="#333" stroke-width="2" rx="0" />
<path d="M1107.4,302.4 L1120.3,309.9 L1107.4,317.29999999999995" fill="none" stroke="#333" stroke-width="1.6" />
<text x="1149.20" y="309.20" font-size="26.75" font-weight="bold" fill="#242424" letter-spacing="0.300">Greater</text>
<rect x="1148.90" y="310.00" width="21.60" height="1.2" fill="#242424"/>
<text x="1253.30" y="309.20" font-size="26.75" font-weight="bold" fill="#242424" letter-spacing="-0.250">Than...</text>
<rect x="1072.3" y="378.2" width="53.5" height="41.60000000000002" fill="#fafafa" stroke="none" stroke-width="0" rx="0" />
<line x1="1086" y1="378.2" x2="1086" y2="419.8" stroke="#727272" stroke-width="1.6" />
<line x1="1112" y1="378.2" x2="1112" y2="419.8" stroke="#727272" stroke-width="1.6" />
<line x1="1072.3" y1="391.5" x2="1125.8" y2="391.5" stroke="#727272" stroke-width="1.6" />
<line x1="1072.3" y1="405.8" x2="1125.8" y2="405.8" stroke="#727272" stroke-width="1.6" />
<rect x="1072.3" y="378.2" width="53.5" height="41.60000000000002" fill="none" stroke="#383838" stroke-width="2" rx="0" />
<rect x="1086.0" y="391.5" width="26" height="14.300000000000011" fill="#f8da8e" stroke="#e06300" stroke-width="2" rx="0" />
<rect x="1093.9" y="401.5" width="38.19999999999982" height="30.099999999999966" fill="#ffffff" stroke="none" stroke-width="0" rx="0" />
<rect x="1096.4" y="404.0" width="33.19999999999982" height="25.099999999999966" fill="#fafafa" stroke="#333" stroke-width="2" rx="0" />
<path d="M1118.8,409.2 L1105.6,416.59999999999997 L1118.8,424.09999999999997" fill="none" stroke="#333" stroke-width="1.6" />
<g transform="translate(1150.20,0) scale(0.8891,1)">
<text x="0" y="416.60" font-size="26.75" font-weight="bold" fill="#242424" letter-spacing="-0.500">Less</text>
</g>
<rect x="1149.90" y="416.80" width="14.83" height="1.2" fill="#242424"/>
<text x="1209.20" y="416.00" font-size="26.75" font-weight="bold" fill="#242424" letter-spacing="-0.300">Than...</text>
<rect x="1072.3" y="484.99999999999994" width="53.5" height="41.599999999999966" fill="#fafafa" stroke="none" stroke-width="0" rx="0" />
<line x1="1086" y1="484.99999999999994" x2="1086" y2="526.5999999999999" stroke="#727272" stroke-width="1.6" />
<line x1="1112" y1="484.99999999999994" x2="1112" y2="526.5999999999999" stroke="#727272" stroke-width="1.6" />
<line x1="1072.3" y1="498.29999999999995" x2="1125.8" y2="498.29999999999995" stroke="#727272" stroke-width="1.6" />
<line x1="1072.3" y1="512.5999999999999" x2="1125.8" y2="512.5999999999999" stroke="#727272" stroke-width="1.6" />
<rect x="1072.3" y="484.99999999999994" width="53.5" height="41.599999999999966" fill="none" stroke="#383838" stroke-width="2" rx="0" />
<rect x="1072.3" y="484.99999999999994" width="13.700000000000045" height="13.5" fill="#88bdeb" stroke="#0560b6" stroke-width="2" rx="0" />
<rect x="1112.0" y="484.99999999999994" width="13.799999999999955" height="13.5" fill="#88bdeb" stroke="#0560b6" stroke-width="2" rx="0" />
<rect x="1086.0" y="498.29999999999995" width="26" height="14.299999999999955" fill="#f8da8e" stroke="#e06300" stroke-width="2" rx="0" />
<text x="1149.40" y="522.80" font-size="26.75" font-weight="bold" fill="#242424" letter-spacing="0.078">Between...</text>
<rect x="1149.10" y="523.60" width="19.60" height="1.2" fill="#242424"/>
<rect x="1072.3" y="591.8" width="53.5" height="41.60000000000002" fill="#fafafa" stroke="none" stroke-width="0" rx="0" />
<line x1="1086" y1="591.8" x2="1086" y2="633.4" stroke="#727272" stroke-width="1.6" />
<line x1="1112" y1="591.8" x2="1112" y2="633.4" stroke="#727272" stroke-width="1.6" />
<line x1="1072.3" y1="605.0999999999999" x2="1125.8" y2="605.0999999999999" stroke="#727272" stroke-width="1.6" />
<line x1="1072.3" y1="619.4" x2="1125.8" y2="619.4" stroke="#727272" stroke-width="1.6" />
<rect x="1072.3" y="591.8" width="53.5" height="41.60000000000002" fill="none" stroke="#383838" stroke-width="2" rx="0" />
<rect x="1086.0" y="605.0999999999999" width="26" height="14.300000000000068" fill="#f8da8e" stroke="#e06300" stroke-width="2" rx="0" />
<rect x="1093.9" y="615.0999999999999" width="38.19999999999982" height="30.100000000000023" fill="#ffffff" stroke="none" stroke-width="0" rx="0" />
<rect x="1096.4" y="617.5999999999999" width="33.19999999999982" height="25.100000000000023" fill="#fafafa" stroke="#333" stroke-width="2" rx="0" />
<line x1="1104.6" y1="627.0999999999999" x2="1121" y2="627.0999999999999" stroke="#333" stroke-width="1.6" />
<line x1="1104.6" y1="633.4" x2="1121" y2="633.4" stroke="#333" stroke-width="1.6" />
<g transform="translate(1150.20,0) scale(0.9775,1)">
<text x="0" y="630.20" font-size="26.75" font-weight="bold" fill="#242424" letter-spacing="-0.500">Equal</text>
</g>
<rect x="1149.90" y="630.40" width="18.19" height="1.2" fill="#242424"/>
<text x="1226.20" y="629.60" font-size="26.75" font-weight="bold" fill="#242424" letter-spacing="0.475">To...</text>
<rect x="1072.3" y="699.3000000000001" width="53.5" height="41.60000000000002" fill="#fafafa" stroke="none" stroke-width="0" rx="0" />
<line x1="1086" y1="699.3000000000001" x2="1086" y2="740.9000000000001" stroke="#727272" stroke-width="1.6" />
<line x1="1112" y1="699.3000000000001" x2="1112" y2="740.9000000000001" stroke="#727272" stroke-width="1.6" />
<line x1="1072.3" y1="712.6" x2="1125.8" y2="712.6" stroke="#727272" stroke-width="1.6" />
<line x1="1072.3" y1="726.9000000000001" x2="1125.8" y2="726.9000000000001" stroke="#727272" stroke-width="1.6" />
<rect x="1072.3" y="699.3000000000001" width="53.5" height="41.60000000000002" fill="none" stroke="#383838" stroke-width="2" rx="0" />
<rect x="1086.0" y="712.6" width="26" height="14.300000000000068" fill="#f8da8e" stroke="#e06300" stroke-width="2" rx="0" />
<rect x="1093.9" y="722.6" width="38.19999999999982" height="30.100000000000023" fill="#ffffff" stroke="none" stroke-width="0" rx="0" />
<rect x="1096.4" y="725.1" width="33.19999999999982" height="25.100000000000023" fill="#fafafa" stroke="#333" stroke-width="2" rx="0" />
<path d="M1108.6,732.3 C1110,730.8 1112,730.2 1113.8,730.2 C1116.8,730.2 1118.6,732 1118.6,735.5 V746" fill="none" stroke="#383838" stroke-width="1.6" />
<path d="M1118.4,736.6 C1113,736.9 1107.6,737.6 1107.6,741.4 C1107.6,744.1 1109.6,745.6 1112,745.6 C1115,745.6 1117.5,743.5 1118.4,741" fill="none" stroke="#383838" stroke-width="1.6" />
<text x="1149.20" y="736.40" font-size="26.75" font-weight="bold" fill="#242424" letter-spacing="1.700">Text</text>
<rect x="1148.90" y="737.20" width="17.60" height="1.2" fill="#242424"/>
<text x="1214.10" y="736.40" font-size="26.75" font-weight="bold" fill="#242424" letter-spacing="1.267">that</text>
<text x="1273.50" y="736.40" font-size="26.75" font-weight="bold" fill="#242424" letter-spacing="-0.360">Contains...</text>
<rect x="1072.3" y="805.4000000000001" width="53.5" height="41.60000000000002" fill="#fafafa" stroke="none" stroke-width="0" rx="0" />
<line x1="1086" y1="805.4000000000001" x2="1086" y2="847.0000000000001" stroke="#727272" stroke-width="1.6" />
<line x1="1112" y1="805.4000000000001" x2="1112" y2="847.0000000000001" stroke="#727272" stroke-width="1.6" />
<line x1="1072.3" y1="818.7" x2="1125.8" y2="818.7" stroke="#727272" stroke-width="1.6" />
<line x1="1072.3" y1="833.0000000000001" x2="1125.8" y2="833.0000000000001" stroke="#727272" stroke-width="1.6" />
<rect x="1072.3" y="805.4000000000001" width="53.5" height="41.60000000000002" fill="none" stroke="#383838" stroke-width="2" rx="0" />
<rect x="1086.0" y="818.7" width="26" height="14.300000000000068" fill="#f8da8e" stroke="#e06300" stroke-width="2" rx="0" />
<rect x="1099.5" y="827.9000000000001" width="33" height="29" fill="#ffffff" stroke="none" stroke-width="0" rx="0" />
<rect x="1102.4" y="830.8000000000001" width="27.4" height="25.6" fill="#fafafa" stroke="#333" stroke-width="2" rx="0" />
<line x1="1102.4" y1="837.2" x2="1129.8" y2="837.2" stroke="#333" stroke-width="1.5" />
<line x1="1108" y1="827.8000000000001" x2="1108" y2="834.8000000000001" stroke="#333" stroke-width="1.6" />
<line x1="1124.2" y1="827.8000000000001" x2="1124.2" y2="834.8000000000001" stroke="#333" stroke-width="1.6" />
<text x="1150.10" y="843.20" font-size="26.75" font-weight="bold" fill="#242424" letter-spacing="0.000">A</text>
<rect x="1149.80" y="844.00" width="19.60" height="1.2" fill="#242424"/>
<text x="1177.60" y="843.20" font-size="26.75" font-weight="bold" fill="#242424" letter-spacing="0.667">Date</text>
<text x="1243.80" y="843.20" font-size="26.75" font-weight="bold" fill="#242424" letter-spacing="-0.355">Occurring...</text>
<rect x="1072.3" y="912.2" width="53.5" height="41.60000000000002" fill="#fafafa" stroke="none" stroke-width="0" rx="0" />
<line x1="1086" y1="912.2" x2="1086" y2="953.8000000000001" stroke="#727272" stroke-width="1.6" />
<line x1="1112" y1="912.2" x2="1112" y2="953.8000000000001" stroke="#727272" stroke-width="1.6" />
<line x1="1072.3" y1="925.5" x2="1125.8" y2="925.5" stroke="#727272" stroke-width="1.6" />
<line x1="1072.3" y1="939.8000000000001" x2="1125.8" y2="939.8000000000001" stroke="#727272" stroke-width="1.6" />
<rect x="1072.3" y="912.2" width="53.5" height="41.60000000000002" fill="none" stroke="#383838" stroke-width="2" rx="0" />
<rect x="1086.0" y="912.2" width="26" height="13.299999999999955" fill="#f8da8e" stroke="#e06300" stroke-width="2" rx="0" />
<rect x="1086.0" y="940.5" width="26" height="13.300000000000068" fill="#f8da8e" stroke="#e06300" stroke-width="2" rx="0" />
<text x="1150.20" y="950.00" font-size="26.75" font-weight="bold" fill="#242424" letter-spacing="0.287">Duplicate</text>
<rect x="1149.90" y="950.80" width="19.60" height="1.2" fill="#242424"/>
<text x="1279.20" y="950.00" font-size="26.75" font-weight="bold" fill="#242424" letter-spacing="-0.138">Values...</text>
<line x1="1032" y1="990" x2="1458" y2="990" stroke="#d6d6d6" stroke-width="1.5" />
<text x="1112.30" y="1036.10" font-size="26.75" font-weight="normal" fill="#242424" letter-spacing="0.933">More</text>
<rect x="1112.00" y="1036.90" width="22.60" height="1.2" fill="#242424"/>
<g transform="translate(1183.90,0) scale(0.9143,1)">
<text x="0" y="1036.70" font-size="26.75" font-weight="normal" fill="#242424" letter-spacing="-0.500">Rules...</text>
</g>
</svg>
</body></html>
